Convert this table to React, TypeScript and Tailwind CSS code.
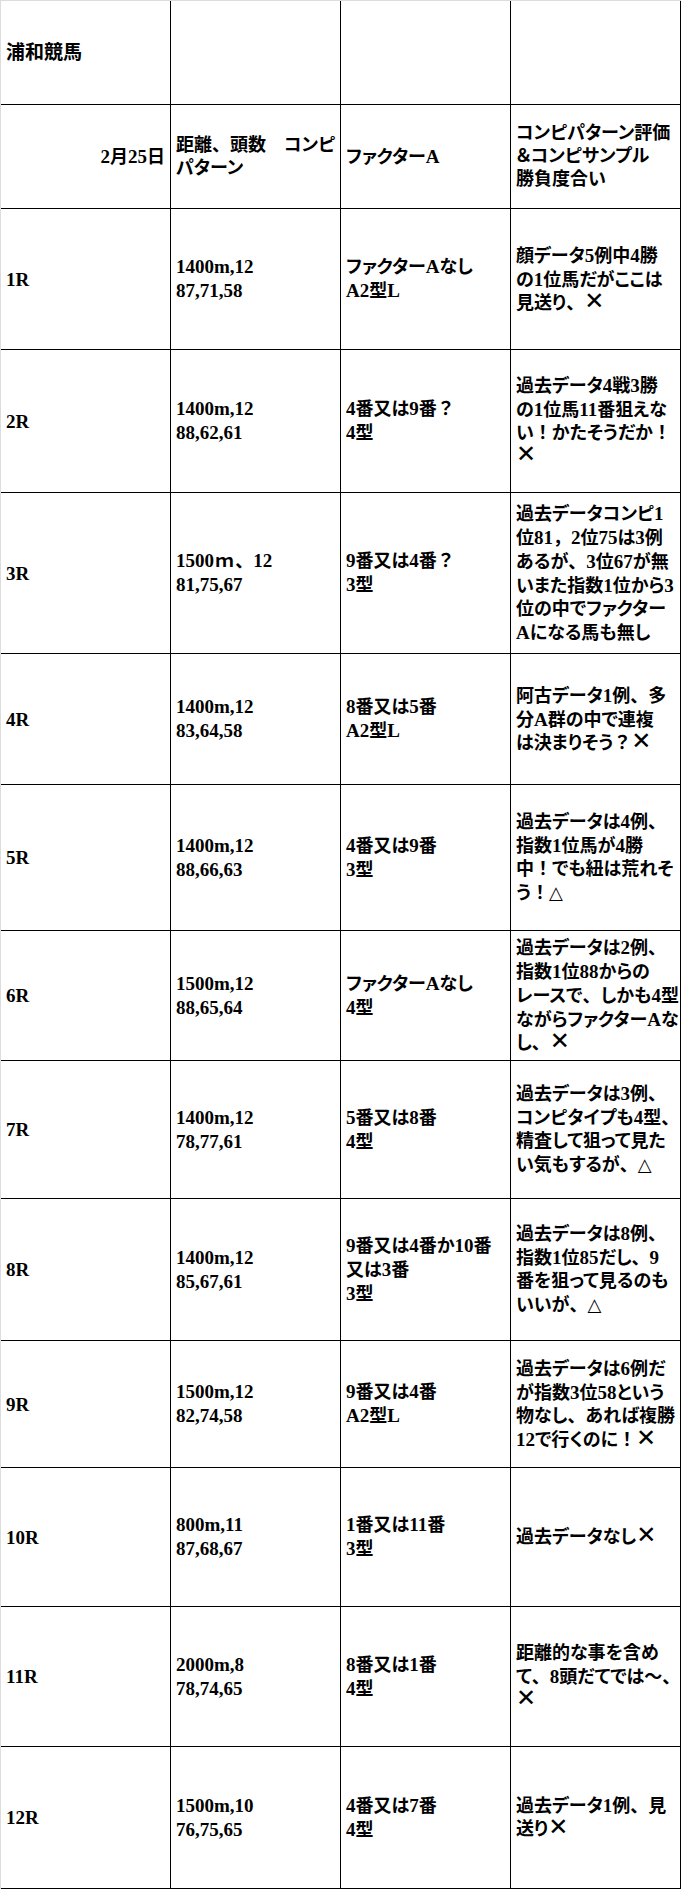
const rows: { race: string; h: string; dist: string[]; factor: string[]; note: string[] }[] = [
  { race: "1R", h: "h-[141px]", dist: ["1400m,12", "87,71,58"], factor: ["ファクターAなし", "A2型L"], note: ["顔データ5例中4勝", "の1位馬だがここは", "見送り、✕"] },
  { race: "2R", h: "h-[143px]", dist: ["1400m,12", "88,62,61"], factor: ["4番又は9番？", "4型"], note: ["過去データ4戦3勝", "の1位馬11番狙えな", "い！かたそうだか！", "✕"] },
  { race: "3R", h: "h-[161px]", dist: ["1500ｍ、12", "81,75,67"], factor: ["9番又は4番？", "3型"], note: ["過去データコンピ1", "位81，2位75は3例", "あるが、3位67が無", "いまた指数1位から3", "位の中でファクター", "Aになる馬も無し"] },
  { race: "4R", h: "h-[131px]", dist: ["1400m,12", "83,64,58"], factor: ["8番又は5番", "A2型L"], note: ["阿古データ1例、多", "分A群の中で連複", "は決まりそう？✕"] },
  { race: "5R", h: "h-[146px]", dist: ["1400m,12", "88,66,63"], factor: ["4番又は9番", "3型"], note: ["過去データは4例、", "指数1位馬が4勝", "中！でも紐は荒れそ", "う！△"] },
  { race: "6R", h: "h-[130px]", dist: ["1500m,12", "88,65,64"], factor: ["ファクターAなし", "4型"], note: ["過去データは2例、", "指数1位88からの", "レースで、しかも4型", "ながらファクターAな", "し、✕"] },
  { race: "7R", h: "h-[138px]", dist: ["1400m,12", "78,77,61"], factor: ["5番又は8番", "4型"], note: ["過去データは3例、", "コンピタイプも4型、", "精査して狙って見た", "い気もするが、△"] },
  { race: "8R", h: "h-[142px]", dist: ["1400m,12", "85,67,61"], factor: ["9番又は4番か10番", "又は3番", "3型"], note: ["過去データは8例、", "指数1位85だし、9", "番を狙って見るのも", "いいが、△"] },
  { race: "9R", h: "h-[127px]", dist: ["1500m,12", "82,74,58"], factor: ["9番又は4番", "A2型L"], note: ["過去データは6例だ", "が指数3位58という", "物なし、あれば複勝", "12で行くのに！✕"] },
  { race: "10R", h: "h-[139px]", dist: ["800m,11", "87,68,67"], factor: ["1番又は11番", "3型"], note: ["過去データなし✕"] },
  { race: "11R", h: "h-[140px]", dist: ["2000m,8", "78,74,65"], factor: ["8番又は1番", "4型"], note: ["距離的な事を含め", "て、8頭だてでは～、", "✕"] },
  { race: "12R", h: "h-[142px]", dist: ["1500m,10", "76,75,65"], factor: ["4番又は7番", "4型"], note: ["過去データ1例、見", "送り✕"] },
];

// split a line into latin runs, punctuation and marks so each gets its own look
function Text({ s }: { s: string }) {
  const parts = s.split(/([\x20-\x7E]+|[！？、，]|[✕△])/).filter((p) => p !== "");
  return (
    <>
      {parts.map((p, j) => {
        if (p === "✕")
          return <span key={j} className="font-['DejaVu_Sans',sans-serif] text-[24px] leading-[0] font-bold">{p}</span>;
        if (p === "△")
          return <span key={j} className="font-['DejaVu_Sans',sans-serif] font-normal">{p}</span>;
        if (/^[\x20-\x7E]+$/.test(p))
          return <span key={j} className="text-[19px]">{p}</span>;
        if (/^[！？、，]$/.test(p))
          return <span key={j} className="[font-feature-settings:normal]">{p}</span>;
        return <span key={j} className="[font-feature-settings:'palt']">{p}</span>;
      })}
    </>
  );
}

function Lines({ lines }: { lines: string[] }) {
  return (
    <div className="flex flex-col">
      {lines.map((l, i) => (
        <span key={i} className="whitespace-nowrap">
          <Text s={l} />
        </span>
      ))}
    </div>
  );
}

const cell = "flex items-center border-r border-b border-black px-[5px] overflow-hidden";

export default function App() {
  return (
    <div className="w-[681px] bg-white text-black border-t border-l border-[#dcdcdc] font-['Liberation_Serif','Noto_Sans_CJK_JP',serif] text-[18px] leading-[23px] font-bold">
      <div className="grid grid-cols-[170px_170px_170px_170px]">
        <div className={`${cell} h-[104px] text-[19px]`}>浦和競馬</div>
        <div className={`${cell} h-[104px]`} />
        <div className={`${cell} h-[104px]`} />
        <div className={`${cell} h-[104px]`} />

        <div className={`${cell} h-[104px] justify-end`}>
          <Lines lines={["2月25日"]} />
        </div>
        <div className={`${cell} h-[104px]`}>
          <Lines lines={["距離、頭数　コンピ", "パターン"]} />
        </div>
        <div className={`${cell} h-[104px]`}>
          <Lines lines={["ファクターA"]} />
        </div>
        <div className={`${cell} h-[104px]`}>
          <Lines lines={["コンピパターン評価", "＆コンピサンプル", "勝負度合い"]} />
        </div>

        {rows.map((r) => (
          <>
            <div key={r.race + "a"} className={`${cell} ${r.h} text-[19px]`}>{r.race}</div>
            <div key={r.race + "b"} className={`${cell} ${r.h}`}>
              <Lines lines={r.dist} />
            </div>
            <div key={r.race + "c"} className={`${cell} ${r.h}`}>
              <Lines lines={r.factor} />
            </div>
            <div key={r.race + "d"} className={`${cell} ${r.h}`}>
              <Lines lines={r.note} />
            </div>
          </>
        ))}
      </div>
    </div>
  );
}
